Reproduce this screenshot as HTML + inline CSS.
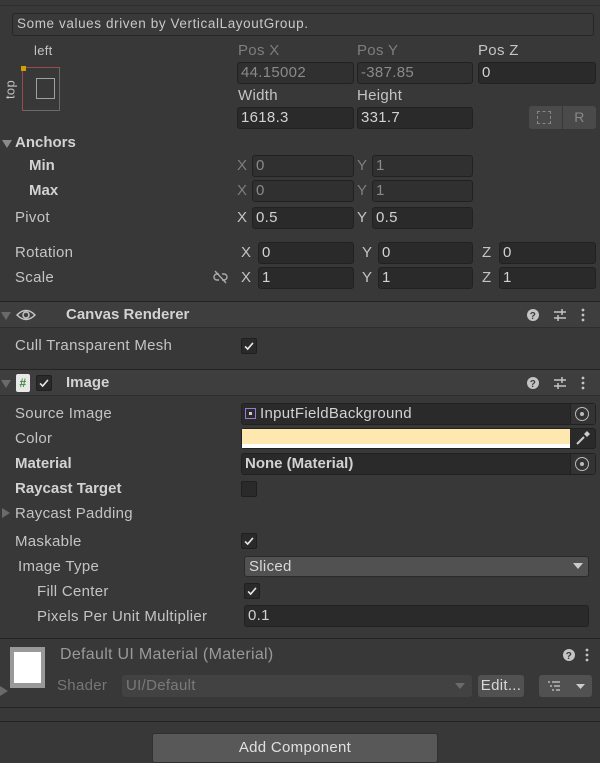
<!DOCTYPE html>
<html><head><meta charset="utf-8"><style>
*{box-sizing:border-box;margin:0;padding:0}
body{width:600px;height:754px;background:#383838;font-family:"Liberation Sans",sans-serif;font-size:15px;letter-spacing:0.3px;color:#c4c4c4;position:relative;overflow:hidden}
.a{position:absolute;white-space:nowrap}
.f{position:absolute;background:#2a2a2a;border:1px solid #212121;border-radius:3px;height:22px;line-height:20px;padding-left:3px;color:#d2d2d2;font-size:15px}
.d{color:#7e7e7e}
.fd{background:#303030;color:#8a8a8a}
.l{position:absolute;line-height:16px;white-space:nowrap}
.b{font-weight:bold;color:#d2d2d2;letter-spacing:0}
.cb{position:absolute;width:16px;height:16px;background:#2a2a2a;border:1px solid #1f1f1f;border-radius:2px}
.hdr{position:absolute;left:0;width:600px;height:27px;background:#3e3e3e;border-top:1px solid #232323;border-bottom:1px solid #2e2e2e}
.sep{position:absolute;left:0;width:600px;height:1px;background:#232323}
.tri{position:absolute;width:0;height:0;border-left:5px solid transparent;border-right:5px solid transparent;border-top:8px solid #8a8a8a}
.trr{position:absolute;width:0;height:0;border-top:5px solid transparent;border-bottom:5px solid transparent;border-left:8px solid #6a6a6a}
</style></head><body>
<svg width="0" height="0" style="position:absolute"><defs><symbol id="ck" viewBox="0 0 16 16"><path d="M3.5 8.5 L6.5 11.5 L12.5 4.5" fill="none" stroke="#e8e8e8" stroke-width="1.8"/></symbol></defs></svg>
<div class="a" style="left:0;top:0;width:600px;height:6px;background:#383838;border-bottom:1px solid #2e2e2e"></div>
<div class="a" style="left:12px;top:13px;width:582px;height:23px;border:1px solid #262626;border-radius:3px;background:#393939"></div>
<div class="a" style="left:17px;top:15px;font-size:13.5px;letter-spacing:0.6px;line-height:18px;color:#c8c8c8">Some values driven by VerticalLayoutGroup.</div>

<div class="l" style="left:34px;top:43px;font-size:13px">left</div>
<div class="a" style="left:0px;top:82px;font-size:13px;transform:rotate(-90deg);transform-origin:center;width:20px;text-align:center">top</div>
<div class="a" style="left:22px;top:67px;width:38px;height:44px;border:1px solid #6a6a6a;border-left-color:#9a4a4a;border-top-color:#9a4a4a"></div>
<div class="a" style="left:21px;top:66px;width:5px;height:5px;background:#d0a000"></div>
<div class="a" style="left:36px;top:78px;width:19px;height:21px;border:1px solid #a0a0a0"></div>

<div class="l d" style="left:238px;top:43px">Pos X</div>
<div class="l d" style="left:357px;top:43px">Pos Y</div>
<div class="l" style="left:478px;top:43px">Pos Z</div>
<div class="f fd" style="left:237px;top:62px;width:117px">44.15002</div>
<div class="f fd" style="left:357px;top:62px;width:116px">-387.85</div>
<div class="f" style="left:478px;top:62px;width:118px">0</div>
<div class="l" style="left:238px;top:88px">Width</div>
<div class="l" style="left:357px;top:88px">Height</div>
<div class="f" style="left:237px;top:107px;width:117px">1618.3</div>
<div class="f" style="left:357px;top:107px;width:116px">331.7</div>
<div class="a" style="left:529px;top:106px;width:33px;height:23px;background:#4a4a4a;border-radius:3px 0 0 3px"></div>
<div class="a" style="left:537px;top:111px;width:14px;height:13px;border:1px dashed #888"></div>
<div class="a" style="left:563px;top:106px;width:33px;height:23px;background:#4a4a4a;border-radius:0 3px 3px 0;color:#888;text-align:center;line-height:23px;font-size:14px">R</div>

<div class="tri" style="left:2px;top:140px"></div>
<div class="l b" style="left:15px;top:135px">Anchors</div>
<div class="l b" style="left:29px;top:158px">Min</div>
<div class="l b" style="left:29px;top:183px">Max</div>
<div class="l d" style="left:237px;top:158px">X</div>
<div class="f fd" style="left:252px;top:155px;width:102px">0</div>
<div class="l d" style="left:357px;top:158px">Y</div>
<div class="f fd" style="left:372px;top:155px;width:101px">1</div>
<div class="l d" style="left:237px;top:183px">X</div>
<div class="f fd" style="left:252px;top:180px;width:102px">0</div>
<div class="l d" style="left:357px;top:183px">Y</div>
<div class="f fd" style="left:372px;top:180px;width:101px">1</div>
<div class="l" style="left:15px;top:210px">Pivot</div>
<div class="l" style="left:237px;top:210px">X</div>
<div class="f" style="left:252px;top:207px;width:102px">0.5</div>
<div class="l" style="left:357px;top:210px">Y</div>
<div class="f" style="left:372px;top:207px;width:101px">0.5</div>

<div class="l" style="left:15px;top:245px">Rotation</div>
<div class="l" style="left:241px;top:245px">X</div><div class="f" style="left:258px;top:242px;width:96px">0</div>
<div class="l" style="left:362px;top:245px">Y</div><div class="f" style="left:378px;top:242px;width:95px">0</div>
<div class="l" style="left:482px;top:245px">Z</div><div class="f" style="left:499px;top:242px;width:97px">0</div>
<div class="l" style="left:15px;top:270px">Scale</div>
<svg class="a" style="left:213px;top:270px" width="15" height="14" viewBox="0 0 15 14"><g fill="none" stroke="#aaa" stroke-width="1.4"><path d="M6 4 L4 4 A3 3 0 0 0 4 10 L6 10 M9 4 L11 4 A3 3 0 0 1 11 10 L9 10"/><path d="M2 1 L13 13"/></g></svg>
<div class="l" style="left:241px;top:270px">X</div><div class="f" style="left:258px;top:267px;width:96px">1</div>
<div class="l" style="left:362px;top:270px">Y</div><div class="f" style="left:378px;top:267px;width:95px">1</div>
<div class="l" style="left:482px;top:270px">Z</div><div class="f" style="left:499px;top:267px;width:97px">1</div>

<div class="hdr" style="top:301px"></div>
<div class="tri" style="left:1px;top:312px;border-top-color:#6a6a6a"></div>
<svg class="a" style="left:15px;top:306px" width="22" height="18" viewBox="0 0 22 18"><path d="M2 9 Q11 0 20 9 Q11 18 2 9Z" fill="none" stroke="#c4c4c4" stroke-width="1.5"/><circle cx="11" cy="9" r="3" fill="none" stroke="#c4c4c4" stroke-width="1.5"/></svg>
<div class="l b" style="left:66px;top:307px">Canvas Renderer</div>
<svg class="a" style="left:526px;top:308px" width="65" height="14" viewBox="0 0 65 14"><circle cx="7" cy="7" r="6" fill="#c4c4c4"/><text x="7" y="11" font-size="10" font-weight="bold" text-anchor="middle" fill="#3e3e3e" font-family="Liberation Sans">?</text><g stroke="#c4c4c4" stroke-width="1.5"><path d="M28 4h12M28 10h12M36 1v6M32 7v6"/></g><g fill="#c4c4c4"><circle cx="57" cy="2" r="1.4"/><circle cx="57" cy="7" r="1.4"/><circle cx="57" cy="12" r="1.4"/></g></svg>
<div class="l" style="left:15px;top:338px">Cull Transparent Mesh</div>
<div class="cb" style="left:241px;top:338px"><svg width="14" height="14"><use href="#ck"/></svg></div>

<div class="hdr" style="top:369px"></div>
<div class="tri" style="left:1px;top:380px;border-top-color:#6a6a6a"></div>
<div class="a" style="left:16px;top:374px;width:14px;height:18px;background:#e8e8e8;border-radius:2px;color:#3a8a3a;font-size:12px;text-align:center;line-height:18px;font-weight:bold">#</div>
<div class="cb" style="left:36px;top:375px"><svg width="14" height="14"><use href="#ck"/></svg></div>
<div class="l b" style="left:66px;top:375px">Image</div>
<svg class="a" style="left:526px;top:376px" width="65" height="14" viewBox="0 0 65 14"><circle cx="7" cy="7" r="6" fill="#c4c4c4"/><text x="7" y="11" font-size="10" font-weight="bold" text-anchor="middle" fill="#3e3e3e" font-family="Liberation Sans">?</text><g stroke="#c4c4c4" stroke-width="1.5"><path d="M28 4h12M28 10h12M36 1v6M32 7v6"/></g><g fill="#c4c4c4"><circle cx="57" cy="2" r="1.4"/><circle cx="57" cy="7" r="1.4"/><circle cx="57" cy="12" r="1.4"/></g></svg>

<div class="l" style="left:15px;top:406px">Source Image</div>
<div class="f" style="left:241px;top:403px;width:355px;padding-left:18px">InputFieldBackground</div>
<div class="a" style="left:245px;top:408px;width:11px;height:11px;border:1px solid #9a7ad8"><div style="margin:3px;width:3px;height:3px;background:#ccc"></div></div>
<div class="a" style="left:570px;top:404px;width:25px;height:20px;background:#333;border-left:1px solid #222"></div>
<div class="a" style="left:575px;top:407px;width:14px;height:14px;border:1.5px solid #bbb;border-radius:50%"><div style="margin:3.5px;width:4px;height:4px;background:#bbb;border-radius:50%"></div></div>
<div class="l" style="left:15px;top:431px">Color</div>
<div class="a" style="left:241px;top:428px;width:355px;height:21px;background:#2a2a2a;border:1px solid #212121;border-radius:3px"></div>
<div class="a" style="left:242px;top:429px;width:328px;height:15px;background:#ffe8b0"></div>
<div class="a" style="left:242px;top:444px;width:328px;height:4px;background:#fff"></div>
<svg class="a" style="left:575px;top:430px" width="16" height="16" viewBox="0 0 16 16"><path d="M2 14 L9 7" stroke="#ccc" stroke-width="2"/><path d="M9 4 L12 1 L15 4 L12 7Z" fill="#ccc"/></svg>
<div class="l b" style="left:15px;top:456px">Material</div>
<div class="f b" style="left:241px;top:453px;width:355px">None (Material)</div>
<div class="a" style="left:570px;top:454px;width:25px;height:20px;background:#333;border-left:1px solid #222"></div>
<div class="a" style="left:575px;top:457px;width:14px;height:14px;border:1.5px solid #bbb;border-radius:50%"><div style="margin:3.5px;width:4px;height:4px;background:#bbb;border-radius:50%"></div></div>
<div class="l b" style="left:15px;top:481px">Raycast Target</div>
<div class="cb" style="left:241px;top:481px"></div>
<div class="trr" style="left:2px;top:508px"></div>
<div class="l" style="left:15px;top:506px">Raycast Padding</div>
<div class="l" style="left:15px;top:534px">Maskable</div>
<div class="cb" style="left:241px;top:533px"><svg width="14" height="14"><use href="#ck"/></svg></div>
<div class="l" style="left:18px;top:559px">Image Type</div>
<div class="a" style="left:244px;top:556px;width:345px;height:21px;background:#515151;border:1px solid #2a2a2a;border-radius:3px;padding-left:4px;line-height:19px;color:#d8d8d8">Sliced</div>
<div class="tri" style="left:573px;top:563px;border-top-color:#ccc;border-top-width:6px"></div>
<div class="l" style="left:37px;top:584px">Fill Center</div>
<div class="cb" style="left:244px;top:583px"><svg width="14" height="14"><use href="#ck"/></svg></div>
<div class="l" style="left:37px;top:609px">Pixels Per Unit Multiplier</div>
<div class="f" style="left:244px;top:605px;width:345px">0.1</div>

<div class="sep" style="top:638px"></div>
<div class="a" style="left:10px;top:647px;width:35px;height:41px;background:#999"></div>
<div class="a" style="left:14px;top:652px;width:27px;height:31px;background:#fff"></div>
<div class="trr" style="left:0px;top:686px"></div>
<div class="l" style="left:60px;top:647px;color:#9a9a9a;font-size:16px">Default UI Material (Material)</div>
<svg class="a" style="left:562px;top:648px" width="30" height="14" viewBox="0 0 30 14"><circle cx="7" cy="7" r="6" fill="#c4c4c4"/><text x="7" y="11" font-size="10" font-weight="bold" text-anchor="middle" fill="#383838" font-family="Liberation Sans">?</text><g fill="#c4c4c4"><circle cx="25" cy="2" r="1.4"/><circle cx="25" cy="7" r="1.4"/><circle cx="25" cy="12" r="1.4"/></g></svg>
<div class="l" style="left:57px;top:678px;color:#777">Shader</div>
<div class="a" style="left:122px;top:675px;width:350px;height:22px;background:#424242;border-radius:3px;padding-left:4px;line-height:21px;color:#7a7a7a">UI/Default</div>
<div class="tri" style="left:455px;top:683px;border-top-color:#6a6a6a;border-top-width:6px"></div>
<div class="a" style="left:478px;top:675px;width:46px;height:22px;background:#515151;border-radius:3px;text-align:center;line-height:21px;color:#d8d8d8">Edit...</div>
<div class="a" style="left:539px;top:675px;width:53px;height:22px;background:#515151;border-radius:3px"></div>
<svg class="a" style="left:547px;top:680px" width="40" height="12" viewBox="0 0 40 12"><g stroke="#ccc" stroke-width="1.2"><path d="M1 2h2M3 6h2M5 10h2M5 2h8M7 6h6M9 10h4"/></g><path d="M29 4h9l-4.5 5z" fill="#ccc"/></svg>
<div class="sep" style="top:707px"></div>
<div class="sep" style="top:721px"></div>
<div class="a" style="left:152px;top:733px;width:286px;height:30px;background:#585858;border:1px solid #303030;border-radius:3px;text-align:center;line-height:28px;color:#e0e0e0">Add Component</div>
</body></html>
